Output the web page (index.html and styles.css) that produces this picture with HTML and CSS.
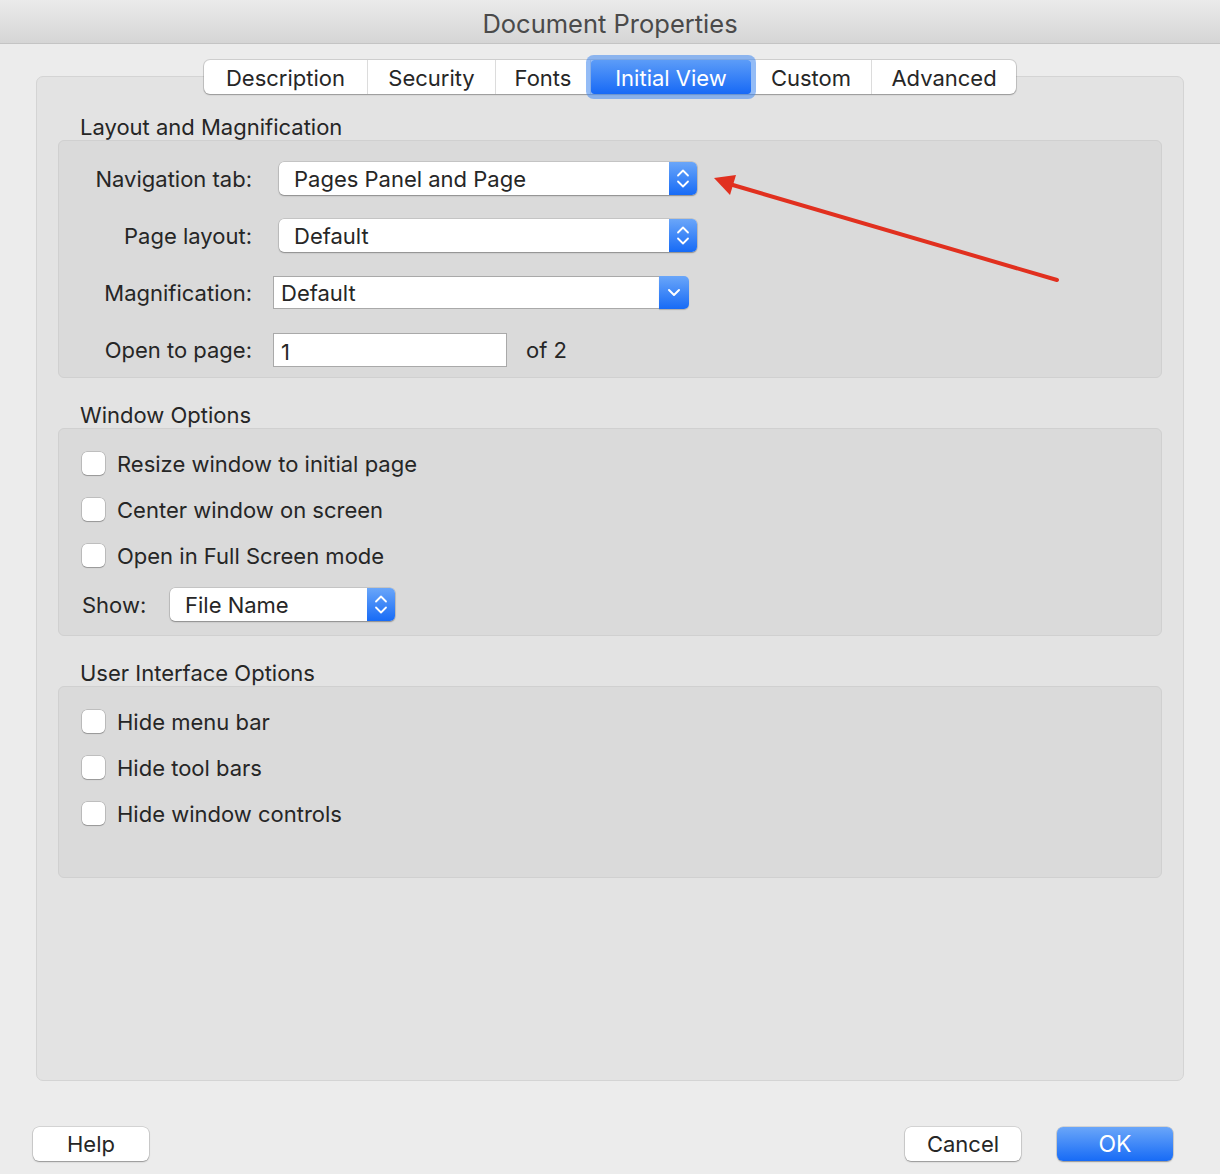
FILE: index.html
```html
<!DOCTYPE html>
<html>
<head>
<meta charset="utf-8">
<link rel="stylesheet" href="styles.css">
</head>
<body>
<div class="window">
  <div class="titlebar">Document Properties</div>
  <div class="content">
    <div class="tabs">
      <div class="tab w-desc">Description</div>
      <div class="tab w-sec">Security</div>
      <div class="tab w-fonts">Fonts</div>
      <div class="tab w-init selected">Initial View</div>
      <div class="tab w-cust">Custom</div>
      <div class="tab w-adv last">Advanced</div>
    </div>
    <div class="panel">
      <div class="heading first">Layout and Magnification</div>
      <div class="box box-layout">
        <div class="frow">
          <div class="flabel">Navigation tab:</div>
          <div class="popup popup-nav">
            <span class="ptext">Pages Panel and Page</span>
            <span class="stepper"><svg width="28" height="33" viewBox="0 0 28 33"><path d="M9 13.5 L14 8.5 L19 13.5 M9 19.5 L14 24.5 L19 19.5" fill="none" stroke="#fff" stroke-width="1.8" stroke-linecap="round" stroke-linejoin="round"/></svg></span>
          </div>
        </div>
        <div class="frow">
          <div class="flabel">Page layout:</div>
          <div class="popup popup-nav">
            <span class="ptext">Default</span>
            <span class="stepper"><svg width="28" height="33" viewBox="0 0 28 33"><path d="M9 13.5 L14 8.5 L19 13.5 M9 19.5 L14 24.5 L19 19.5" fill="none" stroke="#fff" stroke-width="1.8" stroke-linecap="round" stroke-linejoin="round"/></svg></span>
          </div>
        </div>
        <div class="frow">
          <div class="flabel">Magnification:</div>
          <div class="combo">
            <span class="ctext">Default</span>
            <span class="cbtn"><svg width="30" height="33" viewBox="0 0 30 33"><path d="M10 14 L15 19 L20 14" fill="none" stroke="#fff" stroke-width="2" stroke-linecap="round" stroke-linejoin="round"/></svg></span>
          </div>
        </div>
        <div class="frow">
          <div class="flabel">Open to page:</div>
          <div class="field">1</div>
          <div class="of">of 2</div>
        </div>
      </div>

      <div class="heading">Window Options</div>
      <div class="box box-window">
        <div class="crow"><span class="cb"></span><span>Resize window to initial page</span></div>
        <div class="crow"><span class="cb"></span><span>Center window on screen</span></div>
        <div class="crow"><span class="cb"></span><span>Open in Full Screen mode</span></div>
        <div class="showrow">
          <span class="showlabel">Show:</span>
          <div class="popup popup-show">
            <span class="ptext">File Name</span>
            <span class="stepper"><svg width="28" height="33" viewBox="0 0 28 33"><path d="M9 13.5 L14 8.5 L19 13.5 M9 19.5 L14 24.5 L19 19.5" fill="none" stroke="#fff" stroke-width="1.8" stroke-linecap="round" stroke-linejoin="round"/></svg></span>
          </div>
        </div>
      </div>

      <div class="heading">User Interface Options</div>
      <div class="box box-ui">
        <div class="crow"><span class="cb"></span><span>Hide menu bar</span></div>
        <div class="crow"><span class="cb"></span><span>Hide tool bars</span></div>
        <div class="crow"><span class="cb"></span><span>Hide window controls</span></div>
      </div>
    </div>

    <div class="footer">
      <div class="btn">Help</div>
      <div class="spacer"></div>
      <div class="btn">Cancel</div>
      <div class="btn primary">OK</div>
    </div>
  </div>

  <svg class="arrow" width="1220" height="1174" viewBox="0 0 1220 1174">
    <line x1="1057" y1="280" x2="726" y2="183" stroke="#e1301f" stroke-width="4" stroke-linecap="round"/>
    <polygon points="714,178 736,175 730,195" fill="#e1301f"/>
  </svg>
</div>
</body>
</html>
```

FILE: styles.css
```css
* { box-sizing: border-box; }
html, body { margin: 0; padding: 0; }
body {
  font-family: Inter, "Noto Sans", "Liberation Sans", sans-serif;
  font-size: 22px;
  color: #262626;
  background: #ececec;
}
.window {
  position: relative;
  width: 1220px;
  height: 1174px;
  background: #ececec;
  overflow: hidden;
}
.titlebar {
  height: 44px;
  background: linear-gradient(#ebebeb, #d5d5d5);
  border-bottom: 1px solid #c4c4c4;
  text-align: center;
  font-size: 25.5px;
  line-height: 47px;
  color: #4a4a4a;
}
.content {
  padding: 0 36px;
}
.tabs {
  position: relative;
  z-index: 2;
  margin: 16px auto 0;
  width: 812px;
  height: 34px;
  display: flex;
  background: #fff;
  border-radius: 6px;
  box-shadow: 0 0 0 1px rgba(0,0,0,0.12), 0 1px 1.5px rgba(0,0,0,0.25);
}
.tab {
  height: 34px;
  line-height: 36px;
  text-align: center;
  border-right: 1px solid #dcdcdc;
  color: #262626;
}
.tab.last { border-right: none; }
.w-desc { width: 164px; }
.w-sec { width: 128px; }
.w-fonts { width: 95px; }
.w-init { width: 160px; }
.w-cust { width: 121px; }
.w-adv { width: 144px; }
.tab.selected {
  background: linear-gradient(#5c9cf8, #1769f6);
  color: #fff;
  border-right: none;
  border-radius: 3px;
  box-shadow: 0 0 0 5px rgba(70, 140, 240, 0.58);
  position: relative;
  z-index: 1;
}
.panel {
  margin-top: -18px;
  height: 1005px;
  background: #e3e3e3;
  border: 1px solid #d4d4d4;
  border-radius: 7px;
  padding: 0 21px;
}
.heading {
  margin: 23px 0 1px 22px;
  height: 26px;
  line-height: 28px;
}
.heading.first { margin-top: 36px; }
.box {
  background: #dadada;
  border: 1px solid #d0d0d0;
  border-radius: 6px;
}
.box-layout {
  height: 238px;
  padding-top: 21px;
  display: flex;
  flex-direction: column;
  gap: 24px;
}
.frow {
  display: flex;
  align-items: center;
  height: 33px;
}
.flabel {
  width: 193px;
  text-align: right;
  flex: none;
  line-height: 36px;
}
.popup {
  display: flex;
  height: 33px;
  background: #fff;
  border-radius: 5px;
  box-shadow: 0 0 0 0.5px rgba(0,0,0,0.18), 0 1px 1.5px rgba(0,0,0,0.3);
  overflow: hidden;
}
.popup-nav {
  margin-left: 27px;
  width: 418px;
}
.ptext {
  flex: 1;
  padding-left: 15px;
  line-height: 34px;
}
.stepper {
  width: 28px;
  flex: none;
  background: linear-gradient(#6aa6f9, #176bf6);
  display: block;
}
.stepper svg { display: block; }
.combo {
  margin-left: 21px;
  width: 416px;
  height: 33px;
  display: flex;
}
.ctext {
  flex: 1;
  background: #fff;
  border: 1px solid #a9a9a9;
  border-right: none;
  padding-left: 7px;
  line-height: 33px;
}
.cbtn {
  width: 30px;
  flex: none;
  background: linear-gradient(#6aa6f9, #176bf6);
  border-radius: 0 5px 5px 0;
  box-shadow: 0 1px 1px rgba(0,0,0,0.2);
}
.cbtn svg { display: block; }
.field {
  margin-left: 21px;
  width: 234px;
  height: 34px;
  background: #fff;
  border: 1px solid #a9a9a9;
  padding-left: 7px;
  line-height: 37px;
}
.of {
  margin-left: 19px;
  line-height: 36px;
}
.box-window {
  height: 208px;
  padding: 11px 0 0 23px;
}
.box-ui {
  height: 192px;
  padding: 11px 0 0 23px;
}
.crow {
  height: 46px;
  display: flex;
  align-items: center;
}
.crow span:last-child { line-height: 26px; padding-top: 1px; }
.cb {
  width: 23px;
  height: 23px;
  background: #fff;
  border-radius: 5px;
  box-shadow: 0 0 0 0.5px rgba(0,0,0,0.25), 0 1px 1px rgba(0,0,0,0.2);
  margin-right: 12px;
  flex: none;
}
.showrow {
  margin-top: 10px;
  display: flex;
  align-items: center;
  height: 33px;
}
.showlabel {
  width: 88px;
  flex: none;
  line-height: 36px;
}
.popup-show {
  width: 225px;
}
.footer {
  display: flex;
  margin-top: 46px;
  padding: 0 11px 0 0;
  margin-left: -3px;
}
.spacer { flex: 1; }
.btn {
  width: 116px;
  height: 34px;
  line-height: 35px;
  text-align: center;
  background: #fff;
  border-radius: 6px;
  box-shadow: 0 0 0 0.5px rgba(0,0,0,0.2), 0 1px 1.5px rgba(0,0,0,0.3);
}
.btn + .btn { margin-left: 36px; }
.btn.primary {
  background: linear-gradient(#6aa6f9, #176bf6);
  color: #fff;
  font-size: 23px;
}
.arrow {
  position: absolute;
  left: 0;
  top: 0;
  pointer-events: none;
}
```
